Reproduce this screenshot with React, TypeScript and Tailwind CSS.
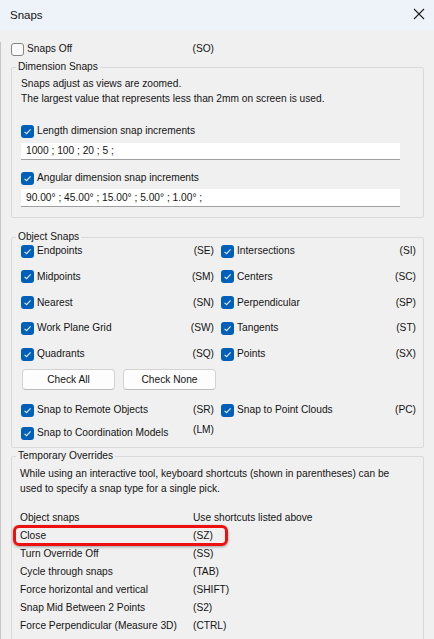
import React from 'react';

function Box({ checked = true }: { checked?: boolean }) {
  if (!checked) {
    return <span className="block w-[13px] h-[13px] shrink-0 rounded-[3px] border border-[#858585] bg-[#f9f9f9]" />;
  }
  return (
    <span className="flex w-[13px] h-[13px] shrink-0 items-center justify-center rounded-[3px] bg-[#0060b9]">
      <svg width="9" height="9" viewBox="0 0 9 9">
        <path d="M1.6 4.8L3.6 6.7L7.6 2.4" fill="none" stroke="#e4edf8" strokeWidth="1.1" />
      </svg>
    </span>
  );
}

function CheckRow({ label, code, checked = true, codeClass = '' }: { label: string; code: string; checked?: boolean; codeClass?: string }) {
  return (
    <div className="flex h-[14px] items-center">
      <Box checked={checked} />
      <span className="ml-[3px] whitespace-nowrap">{label}</span>
      <span className={'ml-auto whitespace-nowrap ' + codeClass}>{code}</span>
    </div>
  );
}

function Group({ title, className = '', children }: { title: string; className?: string; children: React.ReactNode }) {
  return (
    <fieldset className={'border border-[#dadada] rounded-[2px] ' + className}>
      <legend className="ml-[4px] px-[2px] leading-[14px]">{title}</legend>
      {children}
    </fieldset>
  );
}

const objectSnaps = [
  ['Endpoints', '(SE)', 'Intersections', '(SI)'],
  ['Midpoints', '(SM)', 'Centers', '(SC)'],
  ['Nearest', '(SN)', 'Perpendicular', '(SP)'],
  ['Work Plane Grid', '(SW)', 'Tangents', '(ST)'],
  ['Quadrants', '(SQ)', 'Points', '(SX)'],
];

const overrides = [
  ['Turn Override Off', '(SS)'],
  ['Cycle through snaps', '(TAB)'],
  ['Force horizontal and vertical', '(SHIFT)'],
  ['Snap Mid Between 2 Points', '(S2)'],
  ['Force Perpendicular (Measure 3D)', '(CTRL)'],
];

export default function App() {
  return (
    <div className="w-[434px] h-[639px] overflow-hidden bg-[#f0f0f0] text-[#141414] font-['Liberation_Sans',Arial,sans-serif] text-[10.2px] leading-[14px]">
      {/* title bar */}
      <div className="flex h-[30px] items-center justify-between bg-[#eef2f9] pl-[10px] pr-[9px]">
        <span className="text-[11.5px]">Snaps</span>
        <svg width="12" height="12" viewBox="0 0 12 12" className="mb-[3px]">
          <path d="M1 1L11 11M11 1L1 11" stroke="#1f1f1f" strokeWidth="1.1" />
        </svg>
      </div>

      <div className="h-[609px] border-l border-[#c6c6c6] pl-[10px] pr-[10px]">
        <div className="mt-[12px] w-[203px]">
          <CheckRow label="Snaps Off" code="(SO)" checked={false} />
        </div>

        {/* Dimension Snaps */}
        <Group title="Dimension Snaps" className="mt-[4px]">
          <div className="pl-[9px] pt-[1.5px] pb-[10px]">
            <p className="leading-[15px] whitespace-nowrap">
              Snaps adjust as views are zoomed.
              <br />
              The largest value that represents less than 2mm on screen is used.
            </p>
            <div className="mt-[18.5px] flex h-[14px] items-center">
              <Box />
              <span className="ml-[3px]">Length dimension snap increments</span>
            </div>
            <div className="mt-[5px] flex h-[17px] w-[379px] items-center border-b border-[#a0a0a0] bg-white pl-[5px]">
              1000 ; 100 ; 20 ; 5 ;
            </div>
            <div className="mt-[11px] flex h-[14px] items-center">
              <Box />
              <span className="ml-[3px]">Angular dimension snap increments</span>
            </div>
            <div className="mt-[4px] flex h-[18px] w-[379px] items-center border-b border-[#a0a0a0] bg-white pl-[5px]">
              90.00° ; 45.00° ; 15.00° ; 5.00° ; 1.00° ;
            </div>
          </div>
        </Group>

        {/* Object Snaps */}
        <Group title="Object Snaps" className="mt-[12px]">
          <div className="pl-[9px] pr-[7px] pb-[7px]">
            <div className="grid grid-cols-[193px_195px] gap-x-[7px] gap-y-[11.75px]">
              {objectSnaps.map(([a, ac, b, bc]) => (
                <React.Fragment key={a}>
                  <CheckRow label={a} code={ac} />
                  <CheckRow label={b} code={bc} />
                </React.Fragment>
              ))}
            </div>
            <div className="mt-[8px] flex gap-[8px] pl-[1px]">
              <button className="h-[21px] w-[93px] rounded-[4px] border border-[#d2d2d2] border-b-[#bcbcbc] bg-[#fdfdfd] text-[10.2px]">
                Check All
              </button>
              <button className="h-[21px] w-[93px] rounded-[4px] border border-[#d2d2d2] border-b-[#bcbcbc] bg-[#fdfdfd] text-[10.2px]">
                Check None
              </button>
            </div>
            <div className="mt-[13px] grid grid-cols-[193px_195px] gap-x-[7px] gap-y-[9px]">
              <CheckRow label="Snap to Remote Objects" code="(SR)" />
              <CheckRow label="Snap to Point Clouds" code="(PC)" />
              <CheckRow label="Snap to Coordination Models" code="(LM)" codeClass="mb-[6px]" />
            </div>
          </div>
        </Group>

        {/* Temporary Overrides */}
        <Group title="Temporary Overrides" className="mt-[1px]">
          <div className="pl-[8px] pt-[2.5px] pb-[4px]">
            <p className="leading-[15px] whitespace-nowrap">
              While using an interactive tool, keyboard shortcuts (shown in parentheses) can be
              <br />
              used to specify a snap type for a single pick.
            </p>
            <div className="mt-[13px]">
              <div className="flex h-[18px] items-center">
                <span className="w-[173px]">Object snaps</span>
                <span>Use shortcuts listed above</span>
              </div>
              <div className="relative flex h-[18px] items-center">
                <span className="w-[173px]">Close</span>
                <span>(SZ)</span>
                <span className="absolute left-[-7px] top-[-1.5px] h-[21px] w-[215px] rounded-[6px] border-[3px] border-[#ee1010] shadow-[0_1px_3px_rgba(0,0,0,0.35)]" />
              </div>
              {overrides.map(([a, b]) => (
                <div key={a} className="flex h-[18px] items-center">
                  <span className="w-[173px] whitespace-nowrap">{a}</span>
                  <span>{b}</span>
                </div>
              ))}
            </div>
          </div>
        </Group>
      </div>
    </div>
  );
}
